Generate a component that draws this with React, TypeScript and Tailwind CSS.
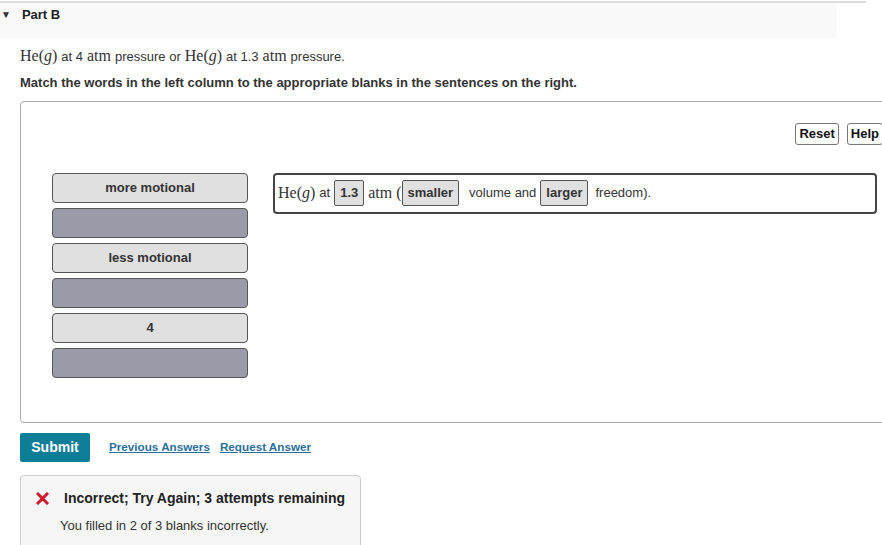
import React from 'react';

const sans = { fontFamily: '"Liberation Sans", Arial, sans-serif' };

// 数学式字体
const M: React.FC<{ children: React.ReactNode }> = ({ children }) => (
  <span className="text-[16px]" style={{ fontFamily: '"Liberation Serif", "DejaVu Serif", serif' }}>
    {children}
  </span>
);

const He = () => (
  <M>
    He(<i>g</i>)
  </M>
);

const Chip: React.FC<{ label?: string; filled?: boolean }> = ({ label, filled }) => (
  <div
    className={
      filled
        ? 'h-[30px] w-[196px] rounded-[4px] border border-[#555] bg-[#e0e0e0] flex items-center justify-center text-[13px] font-bold text-[#333]'
        : 'h-[30px] w-[196px] rounded-[4px] border border-[#555] bg-[#9b9aa8]'
    }
  >
    {label}
  </div>
);

const Blank: React.FC<{ label: string }> = ({ label }) => (
  <span className="inline-flex h-[26px] items-center rounded-[2px] border border-[#555] bg-[#e0e0e0] px-[5px] text-[13px] font-bold text-[#333] align-middle">
    {label}
  </span>
);

export default function App() {
  return (
    <div className="w-[882px] h-[545px] overflow-hidden bg-white text-[#333]" style={sans}>
      <div className="mt-[1px] h-[2px] w-[866px] bg-[#dddddd]" />
      <div className="flex h-[35px] w-[837px] items-start bg-[#f9f9f9] pl-[1px] pt-[4px]">
        <span className="text-[10px] leading-[16px] text-[#333]">▼</span>
        <span className="ml-[11px] text-[13px] leading-[16px] font-bold text-[#222]">Part B</span>
      </div>

      <div className="pl-[20px]">
        <div className="mt-[6px] flex items-baseline gap-[4px] text-[13px]">
          <He />
          <span>at 4</span>
          <M>atm</M>
          <span>pressure or</span>
          <He />
          <span>at 1.3</span>
          <M>atm</M>
          <span>pressure.</span>
        </div>
        <div className="mt-[5px] text-[13px] font-bold text-[#333]">
          Match the words in the left column to the appropriate blanks in the sentences on the right.
        </div>

        <div className="mt-[8px] h-[322px] w-[880px] rounded-[4px] border border-[#aaaaaa]">
          <div className="mt-[21px] flex justify-end gap-[8px] pr-[16px]">
            <button className="h-[22px] rounded-[3px] border border-[#777] bg-white px-[3px] text-[13px] font-bold text-[#111]">
              Reset
            </button>
            <button className="h-[22px] rounded-[3px] border border-[#777] bg-white px-[3px] text-[13px] font-bold text-[#111]">
              Help
            </button>
          </div>

          <div className="mt-[28px] flex items-start">
            <div className="ml-[31px] flex flex-col gap-[5px]">
              <Chip label="more motional" filled />
              <Chip />
              <Chip label="less motional" filled />
              <Chip />
              <Chip label="4" filled />
              <Chip />
            </div>
            <div className="ml-[25px] flex h-[41px] w-[604px] items-center gap-[4px] rounded-[4px] border-2 border-[#444] pl-[3px] text-[13px]">
              <He />
              <span>at</span>
              <Blank label="1.3" />
              <M>atm</M>
              <span className="text-[16px]" style={{ fontFamily: '"Liberation Serif", serif' }}>(</span>
              <span className="-ml-[4px]"><Blank label="smaller" /></span>
              <span className="ml-[6px]">volume and</span>
              <Blank label="larger" />
              <span className="ml-[3px]">freedom).</span>
            </div>
          </div>
        </div>

        <div className="mt-[10px] flex items-center">
          <button className="h-[29px] w-[70px] rounded-[2px] bg-[#0d7d98] text-[14px] font-bold text-white">
            Submit
          </button>
          <a className="ml-[19px] text-[11.7px] font-bold text-[#2a6f9b] underline">Previous Answers</a>
          <a className="ml-[10px] text-[11.7px] font-bold text-[#2a6f9b] underline">Request Answer</a>
        </div>

        <div className="mt-[13px] h-[80px] w-[341px] rounded-[4px] border border-[#cccccc] bg-[#f6f6f6]">
          <div className="mt-[12px] flex items-center">
            <svg className="ml-[15px]" width="13" height="13" viewBox="0 0 13 13">
              <path d="M2 2 L11 11 M11 2 L2 11" stroke="#d0182f" strokeWidth="3" strokeLinecap="square" />
            </svg>
            <span className="ml-[15px] text-[14px] font-bold text-[#222]">
              Incorrect; Try Again; 3 attempts remaining
            </span>
          </div>
          <div className="mt-[7px] ml-[39px] text-[13px] text-[#333]">You filled in 2 of 3 blanks incorrectly.</div>
        </div>
      </div>
    </div>
  );
}
